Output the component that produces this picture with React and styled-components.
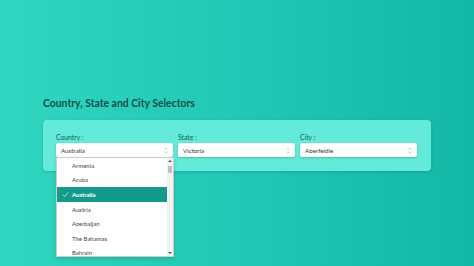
import React from 'react';
import styled, { createGlobalStyle } from 'styled-components';

const GlobalStyle = createGlobalStyle`
  html, body { margin: 0; padding: 0; }
  body { font-family: Lato, "Open Sans", sans-serif; }
`;

const Page = styled.div`
  width: 474px;
  height: 266px;
  box-sizing: border-box;
  padding: 96px 43px 0 43px;
  background: linear-gradient(90deg, #31d6c1 0%, #22c8b5 50%, #12b7a5 100%);
  overflow: hidden;
`;

const Title = styled.h1`
  margin: 0 0 10px 0;
  font-size: 10.4px;
  font-weight: 700;
  color: #0c4f4c;
  line-height: 14px;
`;

const Card = styled.div`
  width: 388px;
  height: 51px;
  box-sizing: border-box;
  background: #63ead8;
  border-radius: 4px;
  box-shadow: 0 1px 3px rgba(0, 80, 70, 0.25);
  padding: 13px 13px 0 13px;
  display: flex;
  gap: 5px;
`;

const Field = styled.div`
  width: 117px;
  position: relative;
  display: flex;
  flex-direction: column;
  gap: 1px;
`;

const Label = styled.div`
  font-size: 6.8px;
  color: #0b6660;
  line-height: 9px;
`;

const Select = styled.div`
  height: 14px;
  box-sizing: border-box;
  background: #fff;
  border-radius: 2px;
  box-shadow: 0 1px 2px rgba(0, 60, 50, 0.25);
  display: flex;
  align-items: center;
  justify-content: space-between;
  padding: 0 5px;
  font-size: 6.2px;
  color: #333;
`;

const Arrows = styled.svg`
  width: 4px;
  height: 7px;
`;

const Dropdown = styled.div`
  position: absolute;
  left: 0;
  top: 24px;
  width: 118px;
  height: 100px;
  background: #fff;
  border: 1px solid #ccc;
  box-sizing: border-box;
  display: flex;
  box-shadow: 0 2px 4px rgba(0, 0, 0, 0.15);
  overflow: hidden;
`;

const List = styled.div`
  flex: 1;
  display: flex;
  flex-direction: column;
`;

const Item = styled.div`
  height: 14.6px;
  flex-shrink: 0;
  display: flex;
  align-items: center;
  font-size: 6px;
  color: ${(p) => (p.$active ? '#fff' : '#444')};
  background: ${(p) => (p.$active ? '#139a8b' : 'transparent')};
  font-weight: ${(p) => (p.$active ? 700 : 400)};
`;

const CheckSlot = styled.span`
  width: 15px;
  display: flex;
  justify-content: flex-end;
  padding-right: 3px;
  box-sizing: border-box;
`;

const Check = styled.svg`
  width: 7px;
  height: 7px;
`;

const Scrollbar = styled.div`
  width: 6px;
  background: #f1f1f1;
  display: flex;
  flex-direction: column;
  align-items: center;
  padding: 2px 0;
  box-sizing: border-box;
`;

const Thumb = styled.div`
  width: 4px;
  height: 7px;
  margin-top: 4px;
  background: #c1c1c1;
`;

const Track = styled.div`
  flex: 1;
`;

const ScrollArrow = styled.div`
  width: 0;
  height: 0;
  border-left: 2px solid transparent;
  border-right: 2px solid transparent;
  ${(p) => (p.$down ? 'border-top: 2px solid #555;' : 'border-bottom: 2px solid #555;')}
`;

const countries = ['Armenia', 'Aruba', 'Australia', 'Austria', 'Azerbaijan', 'The Bahamas', 'Bahrain'];

const UpDown = () => (
  <Arrows viewBox="0 0 4 7">
    <path d="M0.5 2.6 L2 1 L3.5 2.6 M0.5 4.4 L2 6 L3.5 4.4" fill="none" stroke="#aaa" strokeWidth="0.6" />
  </Arrows>
);

export default function App() {
  return (
    <Page>
      <GlobalStyle />
      <Title>Country, State and City Selectors</Title>
      <Card>
        <Field>
          <Label>Country :</Label>
          <Select>Australia<UpDown /></Select>
          <Dropdown>
            <List>
              {countries.map((c) => (
                <Item key={c} $active={c === 'Australia'}>
                  <CheckSlot>
                    {c === 'Australia' && (
                      <Check viewBox="0 0 8 8">
                        <path d="M1 4.3 L3 6.3 L7 1.5" fill="none" stroke="#fff" strokeWidth="0.8" />
                      </Check>
                    )}
                  </CheckSlot>
                  {c}
                </Item>
              ))}
            </List>
            <Scrollbar>
              <ScrollArrow />
              <Thumb />
              <Track />
              <ScrollArrow $down />
            </Scrollbar>
          </Dropdown>
        </Field>
        <Field>
          <Label>State :</Label>
          <Select>Victoria<UpDown /></Select>
        </Field>
        <Field>
          <Label>City :</Label>
          <Select>Aberfeldie<UpDown /></Select>
        </Field>
      </Card>
    </Page>
  );
}
